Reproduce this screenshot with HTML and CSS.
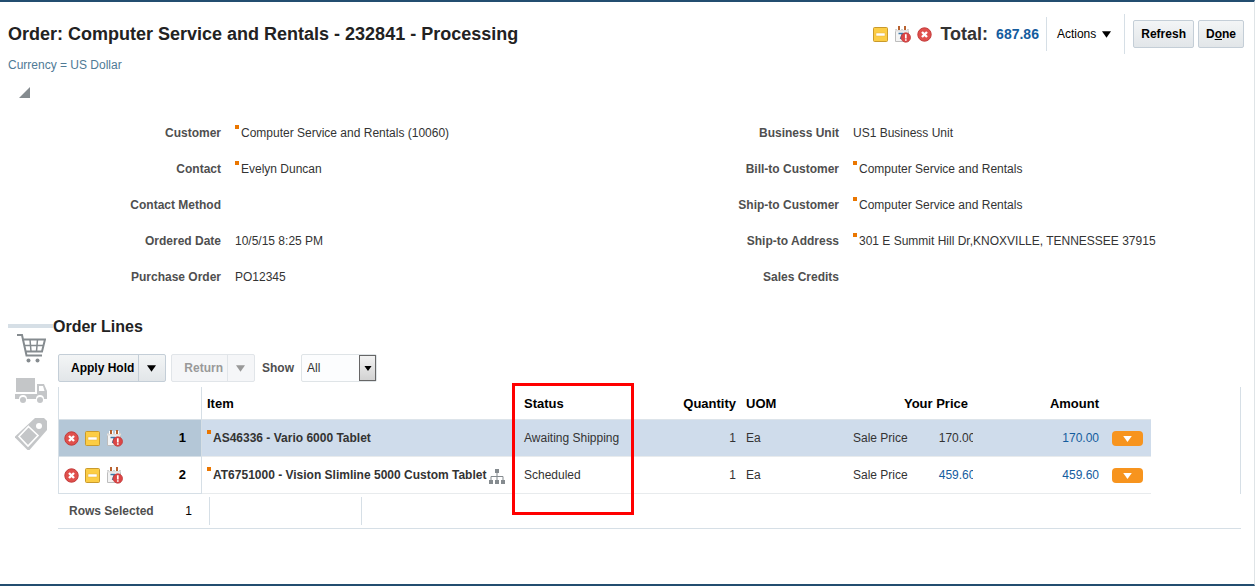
FILE: index.html
```html
<!DOCTYPE html>
<html lang="en">

<head>
    <meta charset="UTF-8">
    <meta name="viewport" content="width=device-width, initial-scale=1.0">
    <title>Order: Computer Service and Rentals - 232841</title>
    <link rel="stylesheet" href="styles.css">
</head>

<body>
    <!-- icon sprite -->
    <svg class="sprite" aria-hidden="true">
        <symbol id="icon-error" viewBox="0 0 15 15">
            <circle cx="7.5" cy="7.5" r="6.7" fill="#e0504c" stroke="#c23a3a" />
            <path d="M5 5l5 5M10 5l-5 5" stroke="#fff" stroke-width="2.4" />
        </symbol>
        <symbol id="icon-hold" viewBox="0 0 15 15">
            <rect x=".5" y=".5" width="14" height="14" rx="1" fill="#fccd45" stroke="#c99a2c" />
            <rect x="3" y="6" width="9" height="3" fill="#fff" stroke="#e5b23c" stroke-width=".5" />
        </symbol>
        <symbol id="icon-schedule" viewBox="0 0 17 17">
            <path d="M1.5 3.5h13v12h-13z" fill="#f4f4f4" stroke="#bdbdbd" />
            <path d="M1 3.5h14v2H1z" fill="#dedede" />
            <path d="M5 1v3M11 1v3" stroke="#fff" stroke-width="4" />
            <path d="M5 0v4M11 0v4" stroke="#b8622f" stroke-width="2" />
            <path d="M4.500 7.500h4L6.500 13" fill="none" stroke="#3d78a8" stroke-width="1.5" />
            <circle cx="11.8" cy="11.5" r="4.7" fill="#dc4545" stroke="#c23a3a" stroke-width=".8" />
            <path d="M11.8 8.2v4.2M11.8 13.2v1.6" stroke="#fff" stroke-width="1.7" />
        </symbol>
        <symbol id="icon-down" viewBox="0 0 10 7">
            <path d="M0 0h10L5 7z" fill="currentColor" />
        </symbol>
        <symbol id="icon-cart" viewBox="0 0 30 30">
            <path d="M1 1h5l4.500 20.500H26M6 5.500h23l-3 12H9.500" fill="none" stroke="#858b8f" stroke-width="2" />
            <path d="M8 11.500h20M14 5.500l1 12M21.500 5.500l-1 12" fill="none" stroke="#858b8f" stroke-width="1.500" />
            <circle cx="12.500" cy="26.500" r="2" fill="#858b8f" />
            <circle cx="21.500" cy="26.500" r="2" fill="#858b8f" />
        </symbol>
        <symbol id="icon-truck" viewBox="0 0 32 26">
            <path d="M1 0h19v14H1zM22 6h7l3 7v8h-3a4 4 0 0 0-8 0h-9a4 4 0 0 0-8 0H0v-5h22z" fill="#c4c6c8" />
            <path d="M24 8h4l1.500 5H24z" fill="#fff" />
            <circle cx="8" cy="22" r="3" fill="#c4c6c8" />
            <circle cx="25" cy="22" r="3" fill="#c4c6c8" />
        </symbol>
        <symbol id="icon-tag" viewBox="0 0 32 32">
            <path d="M20 0h9l3 3v9L14.500 32h-2L0 19.500v-1z" fill="#c4c6c8" />
            <path d="M13.500 8.500l9.500 9L13 28 4 18.500z" fill="none" stroke="#fff" stroke-width="1.600" />
            <circle cx="24" cy="8" r="3" fill="#fff" />
        </symbol>
        <symbol id="icon-tree" viewBox="0 0 16 15">
            <path d="M6 0h4v4H6zM0 11h4v4H0zM6 11h4v4H6zM12 11h4v4h-4z" fill="#858b8f" />
            <path d="M8 4v7M2 11V7.500h12V11" fill="none" stroke="#858b8f" />
        </symbol>
    </svg>

    <main class="page">
        <header class="header">
            <h1 class="header__title">Order: Computer Service and Rentals - 232841 - Processing</h1>
            <div class="header__summary">
                <svg class="icon"><use href="#icon-hold" /></svg>
                <svg class="icon icon--schedule"><use href="#icon-schedule" /></svg>
                <svg class="icon"><use href="#icon-error" /></svg>
                <span class="header__total">Total:</span>
                <a class="header__amount" href="#">687.86</a>
            </div>
            <button class="menu-button">Actions <svg class="arrow"><use href="#icon-down" /></svg></button>
            <div class="header__buttons">
                <button class="button">Refresh</button>
                <button class="button">D<u>o</u>ne</button>
            </div>
        </header>

        <p class="currency">Currency = US Dollar</p>
        <button class="collapse" aria-label="Collapse order details">
            <svg viewBox="0 0 11 11"><path d="M11 0v11H0z" fill="#858b8f" /></svg>
        </button>

        <section class="details">
            <dl class="details__column">
                <dt>Customer</dt>
                <dd class="marked">Computer Service and Rentals (10060)</dd>
                <dt>Contact</dt>
                <dd class="marked">Evelyn Duncan</dd>
                <dt>Contact Method</dt>
                <dd></dd>
                <dt>Ordered Date</dt>
                <dd>10/5/15 8:25 PM</dd>
                <dt>Purchase Order</dt>
                <dd>PO12345</dd>
            </dl>
            <dl class="details__column">
                <dt>Business Unit</dt>
                <dd>US1 Business Unit</dd>
                <dt>Bill-to Customer</dt>
                <dd class="marked">Computer Service and Rentals</dd>
                <dt>Ship-to Customer</dt>
                <dd class="marked">Computer Service and Rentals</dd>
                <dt>Ship-to Address</dt>
                <dd class="marked">301 E Summit Hill Dr,KNOXVILLE, TENNESSEE 37915</dd>
                <dt>Sales Credits</dt>
                <dd></dd>
            </dl>
        </section>

        <section class="lines">
            <nav class="tabs">
                <a class="tabs__item" href="#" aria-label="Order lines"><svg width="30" height="30"><use href="#icon-cart" /></svg></a>
                <a class="tabs__item" href="#" aria-label="Shipping"><svg width="32" height="26"><use href="#icon-truck" /></svg></a>
                <a class="tabs__item" href="#" aria-label="Pricing"><svg width="32" height="32"><use href="#icon-tag" /></svg></a>
            </nav>

            <div class="lines__content">
                <h2 class="lines__title">Order Lines</h2>
                <div class="toolbar">
                    <div class="split">
                        <button class="split__main">Apply Hold</button>
                        <button class="split__arrow" aria-label="More holds"><svg class="arrow"><use href="#icon-down" /></svg></button>
                    </div>
                    <div class="split split--disabled">
                        <button class="split__main" disabled>Return</button>
                        <button class="split__arrow" aria-label="More returns" disabled><svg class="arrow"><use href="#icon-down" /></svg></button>
                    </div>
                    <label class="toolbar__label" for="show">Show</label>
                    <div class="select">
                        <select id="show">
                            <option>All</option>
                        </select>
                        <span class="select__arrow"><svg width="8" height="5"><use href="#icon-down" /></svg></span>
                    </div>
                </div>

                <div class="grid">
                    <table class="table">
                        <colgroup>
                            <col class="col-row">
                            <col class="col-item">
                            <col class="col-status">
                            <col class="col-quantity">
                            <col class="col-uom">
                            <col class="col-price">
                            <col class="col-amount">
                            <col class="col-action">
                        </colgroup>
                        <thead>
                            <tr>
                                <th></th>
                                <th>Item</th>
                                <th>Status</th>
                                <th class="right">Quantity</th>
                                <th>UOM</th>
                                <th class="right">Your Price</th>
                                <th class="right">Amount</th>
                                <th></th>
                            </tr>
                        </thead>
                        <tbody>
                            <tr class="selected">
                                <th scope="row">
                                    <div class="row-head">
                                        <svg class="icon"><use href="#icon-error" /></svg>
                                        <svg class="icon"><use href="#icon-hold" /></svg>
                                        <svg class="icon icon--schedule"><use href="#icon-schedule" /></svg>
                                        <span class="row-head__number">1</span>
                                    </div>
                                </th>
                                <td class="item"><span class="marked">AS46336 - Vario 6000 Tablet</span></td>
                                <td>Awaiting Shipping</td>
                                <td class="right">1</td>
                                <td>Ea</td>
                                <td class="price"><div class="price__inner"><span>Sale Price</span><span>170.00</span></div></td>
                                <td class="right"><a href="#">170.00</a></td>
                                <td><button class="action" aria-label="Line 1 actions"><svg width="11" height="6"><use href="#icon-down" /></svg></button></td>
                            </tr>
                            <tr>
                                <th scope="row">
                                    <div class="row-head">
                                        <svg class="icon"><use href="#icon-error" /></svg>
                                        <svg class="icon"><use href="#icon-hold" /></svg>
                                        <svg class="icon icon--schedule"><use href="#icon-schedule" /></svg>
                                        <span class="row-head__number">2</span>
                                    </div>
                                </th>
                                <td class="item"><span class="marked">AT6751000 - Vision Slimline 5000 Custom Tablet</span><svg class="tree"><use href="#icon-tree" /></svg></td>
                                <td>Scheduled</td>
                                <td class="right">1</td>
                                <td>Ea</td>
                                <td class="price"><div class="price__inner"><span>Sale Price</span><a href="#">459.60</a></div></td>
                                <td class="right"><a href="#">459.60</a></td>
                                <td><button class="action" aria-label="Line 2 actions"><svg width="11" height="6"><use href="#icon-down" /></svg></button></td>
                            </tr>
                        </tbody>
                    </table>
                    <div class="highlight"></div>
                </div>
                <div class="status-bar">
                    <div class="status-bar__selected"><b>Rows Selected</b><span>1</span></div>
                    <div class="status-bar__cell"></div>
                </div>
            </div>
        </section>
    </main>
</body>

</html>
```

FILE: styles.css
```css
* {
    margin: 0;
    padding: 0;
    box-sizing: border-box;
}

body {
    font: 12px/16px "Liberation Sans", Arial, sans-serif;
    color: #333;
    background: #fff;
}

button,
select {
    font: inherit;
    color: #000;
}

a {
    color: #145c9e;
    text-decoration: none;
}

svg {
    display: block;
    flex: none;
}

.sprite {
    position: absolute;
    width: 0;
    height: 0;
}

.page {
    min-height: 100vh;
    padding: 12px 10px 0 8px;
    border-top: 2px solid #234d70;
    border-right: 1px solid #dfe4e7;
    border-bottom: 2px solid #234d70;
}

.icon {
    width: 15px;
    height: 15px;
}

.icon--schedule {
    width: 17px;
    height: 17px;
}

.arrow {
    width: 9px;
    height: 7px;
}

/* header */

.header {
    display: flex;
    align-items: center;
    height: 40px;
}

.header__title {
    flex: 1;
    font-size: 18px;
    line-height: 24px;
    color: #222;
}

.header__summary {
    display: flex;
    align-items: center;
    gap: 6px;
    height: 34px;
    padding-right: 7px;
    border-right: 1px solid #d6dfe6;
}

.header__total {
    margin-left: 2px;
    font-size: 18px;
    font-weight: bold;
}

.header__amount {
    margin-left: 2px;
    font-size: 14px;
    font-weight: bold;
}

.menu-button {
    display: flex;
    align-items: center;
    gap: 6px;
    height: 40px;
    padding: 0 13px 0 10px;
    border: 0;
    border-right: 1px solid #d6dfe6;
    background: none;
}

.header__buttons {
    display: flex;
    gap: 4px;
    padding-left: 8px;
}

.button {
    height: 28px;
    padding: 0 7px;
    border: 1px solid #c4ced7;
    border-radius: 2px;
    background: linear-gradient(#f3f5f6, #e2e6e9);
    font-weight: bold;
}

.currency {
    margin-top: 3px;
    color: #4f7a96;
}

.collapse {
    display: block;
    width: 11px;
    height: 11px;
    margin: 14px 0 0 11px;
    border: 0;
    background: none;
}

/* order details */

.details {
    display: grid;
    grid-template-columns: 1fr 1fr;
    margin-top: 17px;
}

.details__column {
    display: grid;
    grid-template-columns: 213px 1fr;
    grid-auto-rows: 36px;
    column-gap: 14px;
    line-height: 36px;
}

.details dt {
    font-weight: bold;
    color: #4f4f4f;
    text-align: right;
}

/* orange square before values with more information */
.marked::before {
    content: "";
    display: inline-block;
    width: 4px;
    height: 4px;
    margin-right: 2px;
    vertical-align: 8px;
    background: #ea7600;
}

/* order lines */

.lines {
    display: grid;
    grid-template-columns: 45px 1fr;
    margin-top: 22px;
}

.lines__content {
    margin-right: 3px;
}

.tabs {
    display: flex;
    flex-direction: column;
    align-items: center;
    gap: 14px;
    margin-top: 7px;
    padding-top: 6px;
    border-top: 4px solid #d6dfe6;
}

.lines__title {
    font-size: 16px;
    line-height: 20px;
    color: #222;
}

.toolbar {
    display: flex;
    align-items: center;
    gap: 5px;
    margin: 17px 0 5px 5px;
}

.split {
    display: flex;
    height: 28px;
    border: 1px solid #c4ced7;
    border-radius: 2px;
    background: linear-gradient(#f3f5f6, #e2e6e9);
    font-weight: bold;
}

.split__main,
.split__arrow {
    border: 0;
    background: none;
}

.split__main {
    padding: 0 4px 0 12px;
}

.split__arrow {
    padding: 0 9px 0 8px;
    border-left: 1px solid #c4ced7;
}

.split--disabled {
    border-color: #e1e5e9;
    background: #f5f6f8;
}

.split--disabled button {
    border-color: #e1e5e9;
    color: #999;
}

.toolbar__label {
    margin: 0 2px;
    font-weight: bold;
    color: #4f4f4f;
}

.select {
    position: relative;
    width: 76px;
    height: 28px;
}

.select select {
    width: 100%;
    height: 100%;
    padding-left: 5px;
    border: 1px solid #dfe4e7;
    border-radius: 2px;
    appearance: none;
    background: #fcfdfe;
    color: #333;
}

.select__arrow {
    position: absolute;
    top: 1px;
    right: 1px;
    display: flex;
    align-items: center;
    justify-content: center;
    width: 17px;
    height: 26px;
    border: 1px solid #666;
    background: linear-gradient(#f2f2f2, #d2d2d2);
    color: #000;
    pointer-events: none;
}

.grid {
    position: relative;
    margin-left: 5px;
    border-right: 1px solid #d6dfe6;
    border-left: 1px solid #d6dfe6;
}

.table {
    width: 1092px;
    table-layout: fixed;
    border-collapse: separate;
    border-spacing: 0;
}

.col-row {
    width: 143px;
}

.col-item {
    width: 317px;
}

.col-status {
    width: 120px;
}

.col-quantity {
    width: 102px;
}

.col-uom {
    width: 60px;
}

.col-price {
    width: 172px;
}

.col-amount {
    width: 131px;
}

.col-action {
    width: 47px;
}

.table th,
.table td {
    height: 37px;
    padding: 0 5px;
    border-bottom: 1px solid #e8ebed;
    text-align: left;
    white-space: nowrap;
}

.table thead th {
    height: 33px;
    padding-top: 2px;
    border-bottom-color: #dde4ea;
    font-size: 13px;
    color: #000;
}

.table th:first-child {
    border-right: 1px solid #d6dfe6;
    border-bottom-color: #d6dfe6;
}

.table .right {
    text-align: right;
}

.selected td {
    background: #cfdceb;
}

.selected th {
    background: #b4c7d7;
}

.row-head {
    display: flex;
    align-items: center;
    gap: 6px;
}

.row-head__number {
    margin-left: auto;
    padding-right: 10px;
    font-size: 13px;
    color: #000;
}

.item {
    font-weight: bold;
}

.tree {
    display: inline-block;
    width: 16px;
    height: 15px;
    margin-left: 3px;
    vertical-align: -5px;
}

/* the price is cut at the column edge */
.table .price {
    padding: 0;
}

.price__inner {
    display: flex;
    gap: 31px;
    padding-left: 52px;
    overflow: hidden;
}

.action {
    display: flex;
    align-items: center;
    justify-content: center;
    width: 31px;
    height: 15px;
    margin-left: 3px;
    padding-top: 2px;
    border: 0;
    border-radius: 4px;
    background: #f7941e;
    color: #fff;
}

/* red frame round the status column */
.highlight {
    position: absolute;
    top: -4px;
    left: 453px;
    width: 122px;
    height: 132px;
    border: 3px solid #f00;
}

.status-bar {
    display: flex;
    height: 35px;
    margin-left: 5px;
    padding: 3px 0;
    border-bottom: 1px solid #d6dfe6;
}

.status-bar__selected,
.status-bar__cell {
    width: 152px;
    border-right: 1px solid #d6dfe6;
}

.status-bar__selected {
    display: flex;
    align-items: center;
    justify-content: space-between;
    padding: 0 17px 0 11px;
    color: #000;
}

.status-bar__selected b {
    color: #4f4f4f;
}
```
